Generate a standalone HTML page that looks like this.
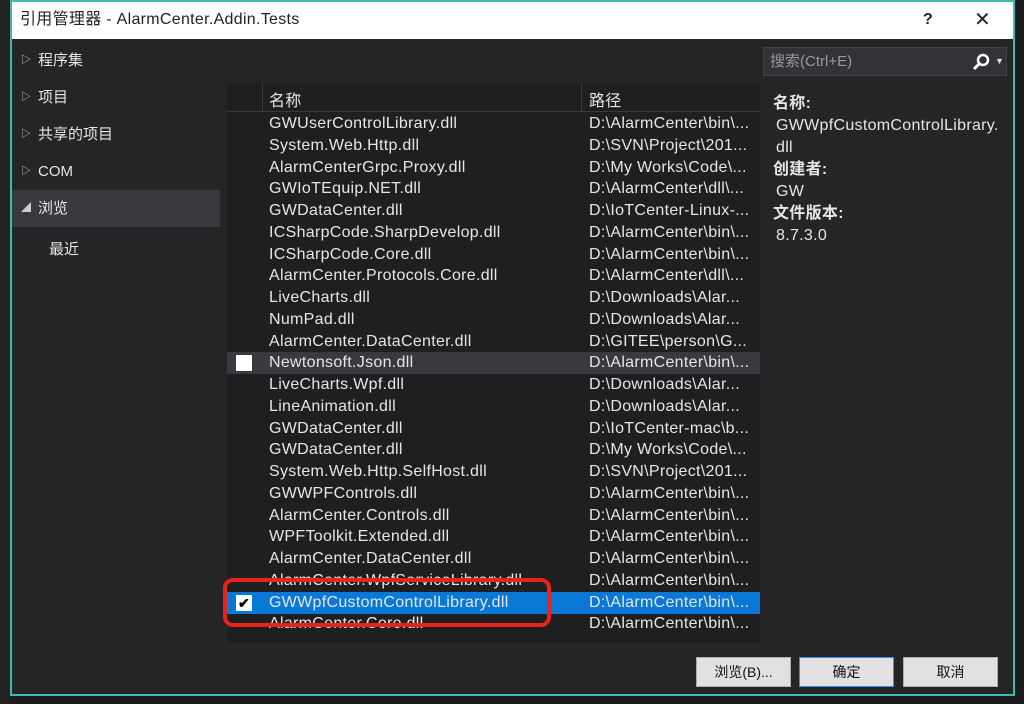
<!DOCTYPE html>
<html><head><meta charset="utf-8"><style>
*{margin:0;padding:0;box-sizing:border-box}
body{width:1024px;height:704px;background:#1c1c1e;position:relative;overflow:hidden;font-family:"Liberation Sans","Noto Sans CJK SC",sans-serif;color:#e6e6e6;font-size:15px}
.a{position:absolute}
.dlg{left:10px;top:0;width:1005px;height:696px;border:2px solid #3fb8b0;background:#252528}
.title{left:12px;top:2px;width:1001px;height:37px;background:#fff;color:#222;font-size:16px;letter-spacing:0.3px;line-height:36px;padding-left:8px}
.nav{left:12px;width:208px;height:37px;line-height:37px;padding-left:26px;font-size:15px}
.tri{position:absolute;left:9px;top:0;font-size:10px;color:#ccc}
.list{left:227px;top:83px;width:533px;height:560px;background:#1f1f22;font-size:16px;letter-spacing:0.3px}
.row{position:absolute;left:0;width:533px;height:22px;line-height:22px}
.n{position:absolute;left:42px}
.p{position:absolute;left:362px}
.btn{top:657px;width:95px;height:30px;background:#e1e1e1;border:1px solid #adadad;color:#111;text-align:center;line-height:28px;font-size:14px}
</style></head><body>
<div class="a" style="left:0;top:0;width:10px;height:704px;background:#222"></div>
<div class="a dlg"></div>
<div class="a title">引用管理器 - AlarmCenter.Addin.Tests
<span style="position:absolute;left:911px;font-weight:bold">?</span>
<span style="position:absolute;left:962px;font-size:20px">✕</span></div>
<div class="a nav" style="top:42px"><span class="tri">▷</span>程序集</div>
<div class="a nav" style="top:79px"><span class="tri">▷</span>项目</div>
<div class="a nav" style="top:116px"><span class="tri">▷</span>共享的项目</div>
<div class="a nav" style="top:153px"><span class="tri">▷</span>COM</div>
<div class="a nav" style="top:190px;background:#3a3a3e"><span class="tri">◢</span>浏览</div>
<div class="a nav" style="top:231px;padding-left:37px">最近</div>
<div class="a" style="left:763px;top:47px;width:244px;height:29px;background:#333337;border:1px solid #434346;color:#999;line-height:27px;padding-left:6px">搜索(Ctrl+E)
<svg style="position:absolute;left:208px;top:5px" width="18" height="18"><circle cx="11" cy="7" r="5" fill="none" stroke="#fff" stroke-width="2.5"/><line x1="7.5" y1="10.5" x2="2" y2="16" stroke="#fff" stroke-width="3"/></svg>
<span style="position:absolute;left:231px;font-size:9px;color:#ddd">▼</span></div>
<div class="a" style="left:773px;top:93px;line-height:22px;font-size:16px;letter-spacing:0.3px">
<b>名称:</b><br><span style="margin-left:3px">GWWpfCustomControlLibrary.</span><br><span style="margin-left:3px">dll</span><br><b>创建者:</b><br><span style="margin-left:3px">GW</span><br><b>文件版本:</b><br><span style="margin-left:3px">8.7.3.0</span></div>
<div class="a list">
<div class="a" style="left:0;top:0;width:533px;height:29px;border-bottom:1px solid #3a3a3e"></div>
<div class="a" style="left:35px;top:0;width:1px;height:29px;background:#3a3a3e"></div>
<div class="a" style="left:354px;top:0;width:1px;height:29px;background:#3a3a3e"></div>
<div class="a" style="left:42px;top:4px">名称</div><div class="a" style="left:362px;top:4px">路径</div>
<div id="rows"></div>
</div>
<svg class="a" style="left:0;top:0" width="1024" height="704"><rect x="225" y="580" width="324" height="45" rx="8" fill="none" stroke="#e8231a" stroke-width="4"/></svg>
<div class="a btn" style="left:696px">浏览(B)...</div>
<div class="a btn" style="left:799px;border-color:#3a8ee6">确定</div>
<div class="a btn" style="left:903px">取消</div>
<script>
var d=[["GWUserControlLibrary.dll","D:\\AlarmCenter\\bin\\..."],["System.Web.Http.dll","D:\\SVN\\Project\\201..."],["AlarmCenterGrpc.Proxy.dll","D:\\My Works\\Code\\..."],["GWIoTEquip.NET.dll","D:\\AlarmCenter\\dll\\..."],["GWDataCenter.dll","D:\\IoTCenter-Linux-..."],["ICSharpCode.SharpDevelop.dll","D:\\AlarmCenter\\bin\\..."],["ICSharpCode.Core.dll","D:\\AlarmCenter\\bin\\..."],["AlarmCenter.Protocols.Core.dll","D:\\AlarmCenter\\dll\\..."],["LiveCharts.dll","D:\\Downloads\\Alar..."],["NumPad.dll","D:\\Downloads\\Alar..."],["AlarmCenter.DataCenter.dll","D:\\GITEE\\person\\G..."],["Newtonsoft.Json.dll","D:\\AlarmCenter\\bin\\..."],["LiveCharts.Wpf.dll","D:\\Downloads\\Alar..."],["LineAnimation.dll","D:\\Downloads\\Alar..."],["GWDataCenter.dll","D:\\IoTCenter-mac\\b..."],["GWDataCenter.dll","D:\\My Works\\Code\\..."],["System.Web.Http.SelfHost.dll","D:\\SVN\\Project\\201..."],["GWWPFControls.dll","D:\\AlarmCenter\\bin\\..."],["AlarmCenter.Controls.dll","D:\\AlarmCenter\\bin\\..."],["WPFToolkit.Extended.dll","D:\\AlarmCenter\\bin\\..."],["AlarmCenter.DataCenter.dll","D:\\AlarmCenter\\bin\\..."],["AlarmCenter.WpfServiceLibrary.dll","D:\\AlarmCenter\\bin\\..."],["GWWpfCustomControlLibrary.dll","D:\\AlarmCenter\\bin\\..."],["AlarmCenter.Core.dll","D:\\AlarmCenter\\bin\\..."]];
var h="";d.forEach(function(r,i){var t=30+i*21.75;var bg="";var cb="";
if(i==11){bg="background:#3a3a3e;";cb='<div style="position:absolute;left:9px;top:3px;width:16px;height:16px;background:#fff"></div>';}
if(i==22){bg="background:#0a78d7;";cb='<div style="position:absolute;left:9px;top:3px;width:16px;height:16px;background:#fff;color:#000;font-size:14px;line-height:16px;text-align:center;font-weight:bold">✔</div>';}
h+='<div class="row" style="top:'+t+'px;'+bg+'">'+cb+'<span class="n">'+r[0]+'</span><span class="p">'+r[1]+'</span></div>';});
document.getElementById("rows").innerHTML=h;
</script>
</body></html>
